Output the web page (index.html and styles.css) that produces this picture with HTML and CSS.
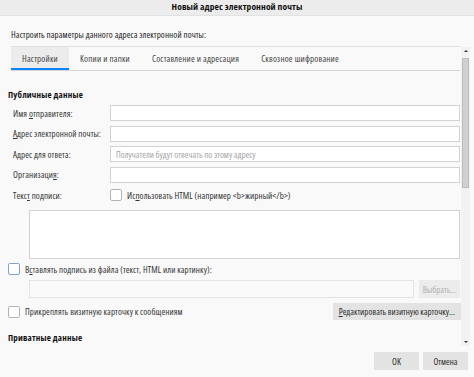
FILE: index.html
```html
<!DOCTYPE html>
<html>
<head>
  <title>Новый адрес электронной почты</title>
  <link rel="stylesheet" href="styles.css">
</head>
<body>
  <div class="titlebar">Новый адрес электронной почты</div>
  <p class="intro">Настроить параметры данного адреса электронной почты:</p>

  <div class="main">
    <div class="panel">
      <div class="tabs">
        <div class="tab active">Настройки</div>
        <div class="tab">Копии и папки</div>
        <div class="tab">Составление и адресация</div>
        <div class="tab">Сквозное шифрование</div>
      </div>

      <div class="content">
        <h2 class="section">Публичные данные</h2>

        <div class="form-grid">
          <label class="lbl">Имя <u>о</u>тправителя:</label>
          <input class="field" type="text">
          <label class="lbl"><u>А</u>дрес электронной почты:</label>
          <input class="field" type="text">
          <label class="lbl">Адрес для ответа:</label>
          <input class="field" type="text" placeholder="Получатели будут отвечать по этому адресу">
          <label class="lbl">Организаци<u>я</u>:</label>
          <input class="field" type="text">
          <label class="lbl">Текс<u>т</u> подписи:</label>
          <div class="check-row">
            <span class="box"></span>
            <span>Ис<u>п</u>ользовать HTML (например &lt;b&gt;жирный&lt;/b&gt;)</span>
          </div>
        </div>

        <div class="sig-area"></div>

        <div class="check-row wide">
          <span class="box focus"></span>
          <span>В<u>с</u>тавлять подпись из файла (текст, HTML или картинку):</span>
        </div>

        <div class="file-row">
          <div class="file-field"></div>
          <button class="btn disabled">Выбрать...</button>
        </div>

        <div class="card-row">
          <div class="check-row">
            <span class="box"></span>
            <span>Прикреплять визитную карточку к сообщениям</span>
          </div>
          <button class="btn"><u>Р</u>едактировать визитную карточку...</button>
        </div>

        <h2 class="section private">Приватные данные</h2>
      </div>
    </div>

    <div class="scrollbar">
      <span class="arrow up"></span>
      <div class="track"><div class="thumb"></div></div>
      <span class="arrow down"></span>
    </div>
  </div>

  <div class="footer">
    <button class="btn dlg">OK</button>
    <button class="btn dlg">Отмена</button>
  </div>
</body>
</html>
```

FILE: styles.css
```css
body { margin: 0; background: #f9f9f9; font-family: "Open Sans", "Noto Sans", sans-serif; font-size: 9px; font-stretch: 87%; letter-spacing: 0.1px; color: #333; width: 474px; height: 377px; overflow: hidden; }
u { text-decoration: underline; text-underline-offset: 1px; }

.titlebar { height: 16px; background: #ececec; border-bottom: 1px solid #e2e2e2; display: flex; justify-content: center; align-items: center; padding-bottom: 3px; box-sizing: border-box; font-weight: bold; font-size: 9.5px; letter-spacing: 0.1px; color: #111; }

.intro { margin: 0; padding: 13px 0 0 11px; height: 30px; box-sizing: border-box; line-height: 12px; color: #222; }

.main { display: flex; height: 300px; }
.panel { width: 461px; overflow: hidden; }

.tabs { display: flex; margin-left: 11px; width: 449px; border-top: 1px solid #e0e0e0; border-bottom: 1px solid #d6d6d6; height: 25px; box-sizing: border-box; }
.tab { padding: 0 11px; line-height: 23px; color: #444; letter-spacing: 0.2px; }
.tab.active { background: #ececec; border-bottom: 2px solid #0a84ff; }

.content { padding: 0 1px 0 8px; }
.section { margin: 0; padding-top: 18px; font-size: 9px; letter-spacing: 0.2px; font-weight: bold; line-height: 12px; color: #111; }
.section.private { padding-top: 12px; }

.form-grid { display: grid; grid-template-columns: 102px 1fr; row-gap: 4.5px; margin-top: 4px; align-items: center; }
.lbl { padding-left: 5px; white-space: nowrap; }
.field { height: 16px; box-sizing: border-box; border: 1px solid #d2d2d2; background: #fff; font: inherit; padding: 0 5px; margin: 0; }
.field::placeholder { color: #a5a5a5; }

.check-row { display: flex; align-items: center; gap: 5px; height: 16px; white-space: nowrap; }
.box { width: 12px; height: 12px; box-sizing: border-box; border: 1px solid #b4b4b4; border-radius: 2px; background: #fff; }
.box.focus { border-color: #7da3cf; }

.sig-area { margin: 7px 0 0 21px; height: 49px; box-sizing: border-box; border: 1px solid #d2d2d2; background: #fff; }
.wide { margin-top: 2px; }

.file-row { display: flex; gap: 5px; margin: 3px 0 0 21px; height: 18px; }
.file-field { flex: 1; border: 1px solid #e4e4e4; background: #fafafa; }

.btn { font: inherit; border: none; background: #e3e3e3; color: #2a2a2a; padding: 0 5px; height: 18px; margin: 0; white-space: nowrap; }
.btn.disabled { width: 41px; padding: 0; background: #ececec; color: #b0b0b0; }

.card-row { display: flex; justify-content: space-between; align-items: center; margin-top: 5px; height: 17px; }
.card-row .btn { margin-right: -1px; height: 17px; padding: 0 6px; }

.scrollbar { width: 9px; margin-top: 1px; display: flex; flex-direction: column; align-items: center; background: #f2f2f2; }
.arrow { width: 0; height: 0; border-left: 2px solid transparent; border-right: 2px solid transparent; margin: 3px 0; }
.arrow.up { border-bottom: 2px solid #333; }
.arrow.down { border-top: 2px solid #333; }
.track { flex: 1; width: 7px; }
.thumb { margin-top: 3px; height: 130px; background: #d0d0d0; border: 1px solid #bcbcbc; box-sizing: border-box; }

.footer { display: flex; justify-content: flex-end; gap: 4px; padding: 6px 6px 0 0; }
.btn.dlg { width: 45px; height: 18px; }
```
